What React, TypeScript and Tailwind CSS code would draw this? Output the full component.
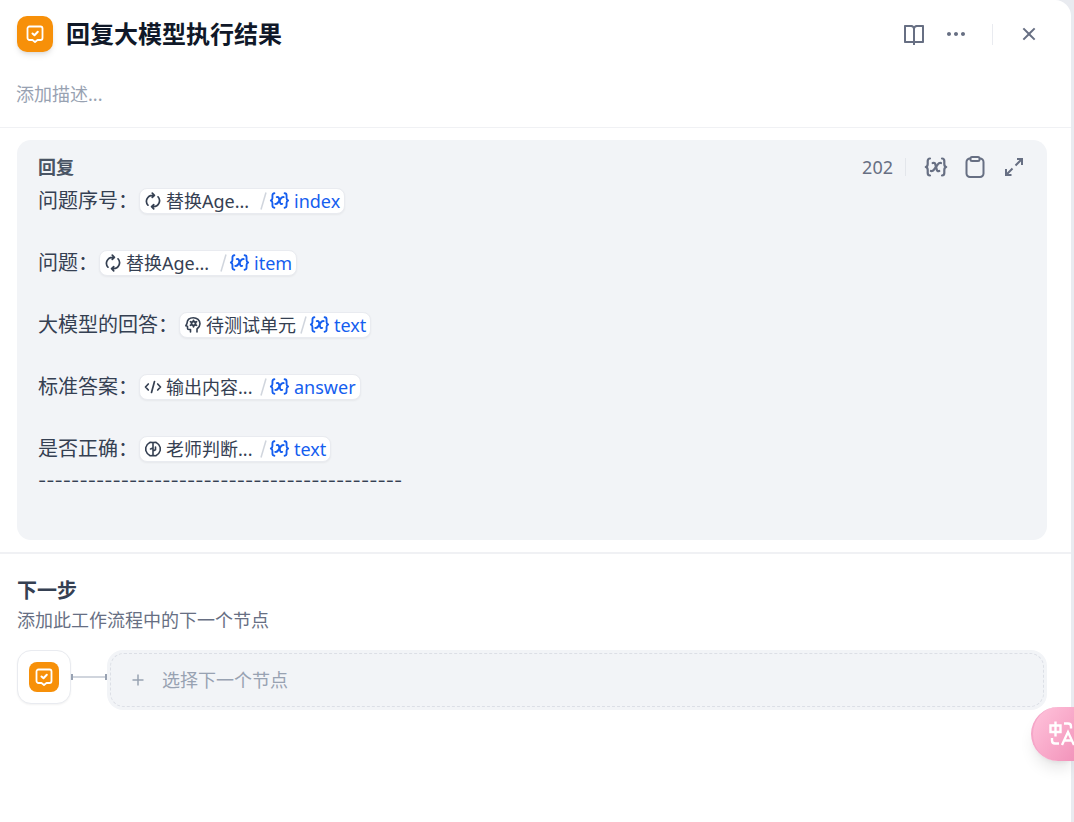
import React, { useState } from 'react';
import { RiBookOpenLine, RiMoreFill, RiCloseLine } from 'react-icons/ri';

interface Variable {
  label: string;
  icon: 'loop' | 'llm' | 'code' | 'classifier';
  node: string;
  name: string;
}

const variables: Variable[] = [
  { label: '问题序号：', icon: 'loop', node: '替换Age...', name: 'index' },
  { label: '问题：', icon: 'loop', node: '替换Age...', name: 'item' },
  { label: '大模型的回答：', icon: 'llm', node: '待测试单元', name: 'text' },
  { label: '标准答案：', icon: 'code', node: '输出内容...', name: 'answer' },
  { label: '是否正确：', icon: 'classifier', node: '老师判断...', name: 'text' },
];

function AnswerIcon({ className }: { className: string }) {
  return (
    <svg viewBox="0 0 20 20" fill="none" stroke="currentColor" strokeWidth="1.8" strokeLinejoin="round" className={className}>
      <path d="M4.500 2.500h11a2 2 0 0 1 2 2v9.500a2 2 0 0 1-2 2H12.500L10 18l-2.500-2H4.500a2 2 0 0 1-2-2V4.500a2 2 0 0 1 2-2z" />
      <path d="M7.500 9.500l2 1.800 3.300-3.600" strokeWidth="2" strokeLinecap="round" />
    </svg>
  );
}

function VariableIcon({ className }: { className: string }) {
  return (
    <svg viewBox="0 0 24 20" fill="none" stroke="currentColor" strokeLinecap="round" strokeLinejoin="round" className={className}>
      <g strokeWidth="2.200">
        <path d="M6 1.500Q3.700 1.500 3.700 4V7Q3.700 9.500 1.800 10Q3.700 10.500 3.700 13V16Q3.700 18.500 6 18.500" />
        <path d="M18 1.500Q20.300 1.500 20.300 4V7Q20.300 9.500 22.200 10Q20.300 10.500 20.300 13V16Q20.300 18.500 18 18.500" />
      </g>
      <g strokeWidth="2.300">
        <path d="M8.700 6Q10.800 5.400 11.400 7.500L12.700 12.500Q13.200 14.600 15.200 14" />
        <path d="M17 6Q15.200 5.500 13.600 7.600L10.400 12.200Q9 14.500 7 14" />
      </g>
    </svg>
  );
}

function NodeIcon({ icon }: { icon: Variable['icon'] }) {
  if (icon === 'loop') {
    return (
      <svg viewBox="0 0 18 18" fill="none" stroke="currentColor" strokeWidth="1.7" strokeLinecap="round" strokeLinejoin="round" className="size-[18px] shrink-0">
        <path d="M4 13.200A6.300 6 0 0 1 8.500 3.300H10M8.300 1.200L10.400 3.300L8.300 5.400" />
        <path d="M14 4.800A6.300 6 0 0 1 9.500 14.700H8M9.700 12.600L7.600 14.700L9.700 16.800" />
      </svg>
    );
  }
  if (icon === 'code') {
    return (
      <svg viewBox="0 0 18 18" fill="none" stroke="currentColor" strokeWidth="1.7" strokeLinecap="round" strokeLinejoin="round" className="size-[18px] shrink-0">
        <path d="M4.300 6L1.500 9l2.800 3M13.700 6l2.800 3-2.800 3M10.500 3.500l-3 11" />
      </svg>
    );
  }
  if (icon === 'llm') {
    return (
      <svg viewBox="0 0 18 18" fill="none" stroke="currentColor" strokeWidth="1.6" strokeLinecap="round" strokeLinejoin="round" className="size-[18px] shrink-0">
        <path d="M6.500 16v-2.500H4.800Q3.500 13.500 3.500 12.200V10.300L1.800 9.800L3 7.300C3.200 3.800 5.800 1.700 9.300 1.700C13 1.700 16 4.300 16 7.800C16 10 15 11.500 13 13V16" />
        <circle cx="9.500" cy="7.500" r="2" strokeWidth="1.800" />
        <path d="M9.500 4.200v1M9.500 10v1M6.400 5.700l1 .6M11.600 8.800l1 .6M6.400 9.300l1-.6M11.600 6.300l1-.6" />
      </svg>
    );
  }
  return (
    <svg viewBox="0 0 18 18" fill="none" stroke="currentColor" strokeWidth="1.6" strokeLinecap="round" strokeLinejoin="round" className="size-[18px] shrink-0">
      <path d="M9 2.500L6 2.300L3.300 4.500L1.800 7.500V10.500L3.300 13.500L6 15.700L9 15.500L12 15.700L14.700 13.500L16.200 10.500V7.500L14.700 4.500L12 2.300z" />
      <path d="M9 3v12M6.500 9L9 8M9 11l2.500-1.300V7" />
    </svg>
  );
}

function VariableChip({ variable }: { variable: Variable }) {
  return (
    <span className="ml-px flex h-[26px] items-center rounded-lg border border-[#e9ebf0] bg-white px-1 text-lg leading-6 shadow-xs">
      <NodeIcon icon={variable.icon} />
      <span className="ml-1 w-[94px] whitespace-nowrap">{variable.node}</span>
      <svg viewBox="0 0 8 18" fill="none" stroke="#d0d5dd" strokeWidth="1.5" className="h-[18px] w-2 shrink-0">
        <path d="M6 0.500L1 17.500" />
      </svg>
      <VariableIcon className="ml-px h-[17px] w-[21px] shrink-0 text-[#155eef]" />
      <span className="ml-1 text-[#155eef]">{variable.name}</span>
    </span>
  );
}

export default function App() {
  const [description, setDescription] = useState('');

  return (
    <div className="min-h-screen overflow-hidden bg-[#e9ebf0] pr-[3px] font-['Noto_Sans','Noto_Sans_CJK_SC',sans-serif] text-[#354052]">
      <main className="min-h-screen rounded-tr-2xl bg-white">
        {/* Header */}
        <header className="border-b border-[#f0f1f4] pb-[18px] pl-4 pr-4 pt-4">
          <div className="flex h-9 items-center pl-px">
            <span className="flex size-9 items-center justify-center rounded-[10px] bg-[#f79009] text-white shadow-md">
              <AnswerIcon className="size-5" />
            </span>
            <h1 className="ml-[13px] flex-1 text-2xl font-bold text-[#101828]">回复大模型执行结果</h1>
            <div className="flex items-center pr-[14px] text-[#676f83]">
              <button type="button" aria-label="帮助文档">
                <RiBookOpenLine className="size-6" />
              </button>
              <button type="button" aria-label="更多" className="ml-[18px]">
                <RiMoreFill className="size-6" />
              </button>
              <span className="ml-6 h-[21px] w-px bg-[#e9ebf0]" />
              <button type="button" aria-label="关闭" className="ml-6">
                <RiCloseLine className="size-6" />
              </button>
            </div>
          </div>
          <input
            aria-label="添加描述"
            placeholder="添加描述..."
            value={description}
            onChange={(e) => setDescription(e.target.value)}
            className="mt-[26px] block h-[31px] w-full text-lg outline-none placeholder:text-[#98a2b2]"
          />
        </header>

        {/* Answer editor */}
        <section className="border-b-2 border-[#f0f1f4] py-3 pl-[17px] pr-6">
          <div className="min-h-[400px] rounded-[14px] bg-[#f2f4f7] px-[21px] pt-3">
            <div className="flex h-[30px] items-center">
              <h2 className="flex-1 text-lg font-bold text-[#495464]">回复</h2>
              <div className="flex items-center text-[#676f83]">
                <span className="text-lg">202</span>
                <span className="ml-3 h-[18px] w-px bg-[#e3e6eb]" />
                <button type="button" aria-label="插入变量" className="ml-[18px]">
                  <VariableIcon className="h-5 w-6" />
                </button>
                <button type="button" aria-label="复制" className="ml-[15px]">
                  <svg viewBox="0 0 24 24" fill="none" stroke="currentColor" strokeWidth="2" strokeLinejoin="round" className="size-6">
                    <path d="M8 3.500H7a3.500 3.500 0 0 0-3.500 3.500V18.500a3.500 3.500 0 0 0 3.500 3.500h10a3.500 3.500 0 0 0 3.500-3.500V7a3.500 3.500 0 0 0-3.500-3.500H16" />
                    <rect x="7.500" y="2" width="9" height="4" rx="1.500" />
                  </svg>
                </button>
                <button type="button" aria-label="展开" className="ml-[15px]">
                  <svg viewBox="0 0 24 24" fill="none" stroke="currentColor" strokeWidth="2" className="size-6">
                    <path d="M15 4h5v6M20 4l-6.500 6.500M9.500 20H4v-6M4 20l6.500-6.500" />
                  </svg>
                </button>
              </div>
            </div>
            <div className="mt-[3px] flex flex-col gap-[31px] text-xl">
              {variables.map((variable) => (
                <p key={variable.label} className="flex h-[31px] items-center whitespace-nowrap">
                  {variable.label}
                  <VariableChip variable={variable} />
                </p>
              ))}
            </div>
            <p className="font-['Inter',sans-serif] text-lg leading-[33px]">--------------------------------------------</p>
          </div>
        </section>

        {/* Next step */}
        <section className="pl-[17px] pr-6 pt-[22px]">
          <h2 className="text-xl font-bold leading-[30px]">下一步</h2>
          <p className="text-lg leading-7 text-[#676f83]">添加此工作流程中的下一个节点</p>
          <div className="mt-4 flex items-start">
            <span className="flex size-[54px] items-center justify-center rounded-[14px] border border-[#e9ebf0] bg-white shadow-xs">
              <span className="flex size-[30px] items-center justify-center rounded-lg bg-[#f79009] text-white">
                <AnswerIcon className="size-5" />
              </span>
            </span>
            <svg viewBox="0 0 36 54" fill="none" className="h-[54px] w-9 shrink-0">
              <path d="M1 27h34" stroke="#d0d5dd" strokeWidth="2" />
              <path d="M1 24v6M35 24v6" stroke="#98a2b2" strokeWidth="2" />
            </svg>
            <div className="flex-1 rounded-2xl bg-[#f2f4f7] p-[3px]">
              <button type="button" className="flex h-[54px] w-full items-center rounded-[14px] border border-dashed border-[#dcdfe6] text-lg text-[#98a2b2]">
                <svg viewBox="0 0 12 12" stroke="currentColor" strokeWidth="1.500" className="ml-[21px] size-3">
                  <path d="M6 0.500v11M0.500 6h11" />
                </svg>
                <span className="ml-[18px]">选择下一个节点</span>
              </button>
            </div>
          </div>
        </section>
      </main>

      {/* Floating translate button */}
      <button
        type="button"
        aria-label="翻译"
        className="fixed right-0 top-[707px] h-[54px] w-[43px] overflow-hidden rounded-l-full border-l-2 border-[#f5a6c8] bg-gradient-to-br from-[#ffc4dc] to-[#f294bb] text-white shadow-lg"
      >
        <svg viewBox="0 0 26 28" fill="none" stroke="currentColor" strokeWidth="2.400" className="ml-[15px] h-7 w-[26px]">
          <path d="M2.500 5.500h10v6.500h-10zM7.500 1.500v15" />
          <path d="M16 3.500h4q3 0 3 3v2M4 18v2.500q0 3 3 3h4" />
          <path d="M14 25l6-13 6 13M16.500 20.500h8" />
        </svg>
      </button>
    </div>
  );
}
